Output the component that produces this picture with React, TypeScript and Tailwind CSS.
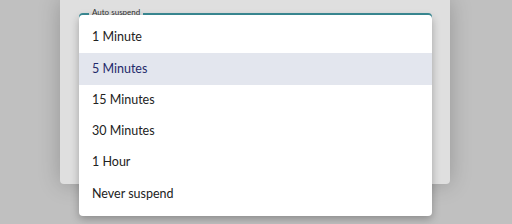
import React from "react";

const options = ["1 Minute", "5 Minutes", "15 Minutes", "30 Minutes", "1 Hour", "Never suspend"];

export default function App() {
  return (
    <div
      className="relative h-[224px] w-[512px] overflow-hidden bg-[#c0c0c0]"
      style={{ fontFamily: "Lato, 'Noto Sans', sans-serif" }}
    >
      <div className="ml-[60px] h-[184px] w-[390px] rounded-b-[4px] bg-[#dfdfdf] shadow-[0_0_22px_rgba(0,0,0,0.22)]">
        <div className="ml-[19px] pt-[13px] w-[353px]">
          <div className="relative h-[56px] rounded-[4px] border-2 border-[#3b8c96]">
            <span className="absolute left-[8px] top-[-9px] bg-[#dfdfdf] px-[3px] text-[8px] leading-[12px] text-[#333]">
              Auto suspend
            </span>
          </div>
        </div>
      </div>
      <div className="absolute left-[79px] top-[15px] w-[353px] rounded-[4px] bg-white pt-[7px] pb-[6px] shadow-[0_3px_8px_rgba(0,0,0,0.28)]">
        {options.map((o, i) => (
          <div
            key={o}
            className={
              i === 1
                ? "flex h-[31.3px] items-center bg-[#e3e6ee] pl-[13px] text-[12.5px] text-[#1f2a6b]"
                : "flex h-[31.3px] items-center pl-[13px] text-[12.5px] text-[#222]"
            }
          >
            {o}
          </div>
        ))}
      </div>
    </div>
  );
}
